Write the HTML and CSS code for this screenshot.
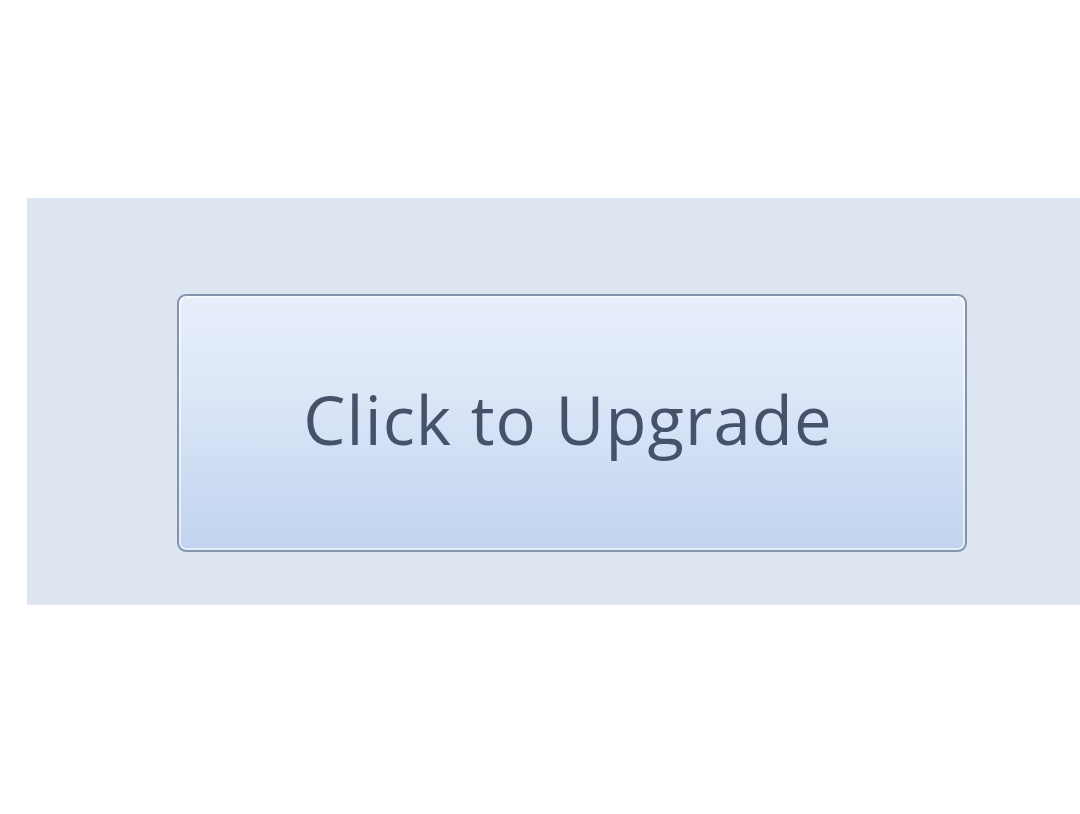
FILE: index.html
```html
<!DOCTYPE html>
<html>
<head>
<meta charset="utf-8">
<link rel="stylesheet" href="styles.css">
</head>
<body>
<div class="page">
  <div class="panel">
    <button class="upgrade">Click to Upgrade</button>
  </div>
</div>
</body>
</html>
```
FILE: styles.css
```css
html, body {
  margin: 0;
  padding: 0;
  background: #ffffff;
}
.page {
  width: 1080px;
  height: 814px;
  padding-top: 198px;
  padding-left: 27px;
  box-sizing: border-box;
}
.panel {
  width: 1053px;
  height: 407px;
  background: #dde5f1;
  padding-top: 96px;
  padding-left: 150px;
  box-sizing: border-box;
}
.upgrade {
  display: flex;
  align-items: center;
  justify-content: center;
  width: 790px;
  height: 258px;
  box-sizing: border-box;
  border: 2px solid #8494ad;
  border-radius: 9px;
  background: linear-gradient(to bottom, #e8effb 0%, #dbe6f7 40%, #c1d3ef 100%);
  box-shadow: inset 0 0 0 2px rgba(255,255,255,0.55);
  font-family: "Open Sans", "Noto Sans", sans-serif;
  font-size: 67px;
  color: #46526a;
  padding: 0 8px 8px 0;
  letter-spacing: 1.1px;
}
```
